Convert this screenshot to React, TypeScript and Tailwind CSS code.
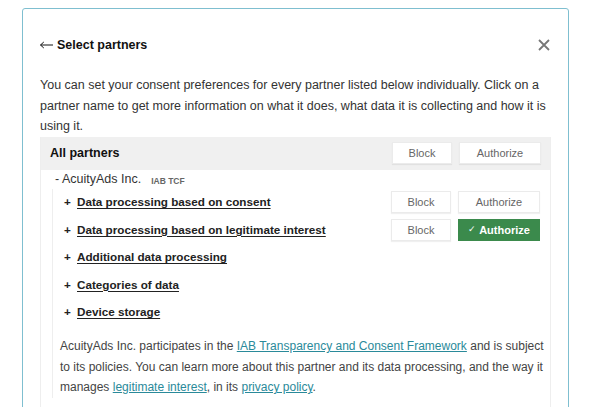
import React from "react";

const font = { fontFamily: '"Liberation Sans", Arial, sans-serif' };

function Btn({ label, active }: { label: string; active?: boolean }) {
  if (active) {
    return (
      <div className="flex h-[22px] w-[82px] items-center justify-center gap-[3px] bg-[#3b8a4c] text-[11px] font-bold text-white">
        <span className="text-[9px] font-normal">✓</span>
        <span>{label}</span>
      </div>
    );
  }
  return (
    <div
      className={`flex h-[22px] items-center justify-center border border-[#ebebeb] bg-white text-[11px] text-[#666] shadow-[0_1px_1px_rgba(0,0,0,0.06)] ${
        label === "Block" ? "w-[60px]" : "w-[82px]"
      }`}
    >
      {label}
    </div>
  );
}

function Item({ label, buttons, active }: { label: string; buttons?: boolean; active?: boolean }) {
  return (
    <div className="flex h-[27.5px] items-center justify-between pl-[4px] pr-[10px]">
      <div className="flex items-center text-[11.7px] font-bold text-[#222]">
        <span className="w-[13px]">+</span>
        <span className="underline underline-offset-2">{label}</span>
      </div>
      {buttons && (
        <div className="flex gap-[7px]">
          <Btn label="Block" />
          <Btn label="Authorize" active={active} />
        </div>
      )}
    </div>
  );
}

export default function App() {
  return (
    <div className="min-h-screen overflow-hidden bg-white pl-[22px] pt-[8px]" style={font}>
      <div className="h-[420px] w-[547px] rounded-[3px] border border-[#7fbfd0] bg-white px-[17px] pt-[26px]">
        <div className="flex h-[20px] items-center justify-between">
          <div className="flex items-center text-[12.5px] font-bold text-[#111]">
            <svg width="13" height="8" viewBox="0 0 13 8" className="mr-[4px]">
              <path d="M0.5 4H13M0.5 4L3.8 1M0.5 4L3.8 7" stroke="#111" strokeWidth="1" fill="none" />
            </svg>
            <span>Select partners</span>
          </div>
          <svg width="12" height="12" viewBox="0 0 12 12" className="mr-[1px]">
            <path d="M1 1L11 11M11 1L1 11" stroke="#777" strokeWidth="1.8" />
          </svg>
        </div>
        <p className="mt-[20px] text-[12.5px] leading-[20.5px] text-[#333]">
          You can set your consent preferences for every partner listed below individually. Click on a partner name
          to get more information on what it does, what data it is collecting and how it is using it.
        </p>
        <div className="h-[300px] border-x border-[#eee]">
          <div className="flex h-[33px] items-center justify-between bg-[#f0f0f0] pl-[9px] pr-[9px]">
            <div className="text-[12.5px] font-bold text-[#111]">All partners</div>
            <div className="flex gap-[7px]">
              <Btn label="Block" />
              <Btn label="Authorize" />
            </div>
          </div>
          <div className="flex h-[19px] items-end pl-[14px] text-[12.5px] text-[#333]">
            <span>- AcuityAds Inc.</span>
            <span className="mb-[1px] ml-[10px] text-[8.5px] font-bold text-[#666]">IAB TCF</span>
          </div>
          <div className="ml-[11px] border-l border-[#eee] pl-[7px]">
            <Item label="Data processing based on consent" buttons />
            <Item label="Data processing based on legitimate interest" buttons active />
            <Item label="Additional data processing" />
            <Item label="Categories of data" />
            <Item label="Device storage" />
            <p className="mt-[10px] pr-[6px] text-[12px] leading-[20.5px] text-[#444]">
              AcuityAds Inc. participates in the{" "}
              <span className="text-[#2a8a9a] underline">IAB Transparency and Consent Framework</span> and is subject
              to its policies. You can learn more about this partner and its data processing, and the way it manages{" "}
              <span className="text-[#2a8a9a] underline">legitimate interest</span>, in its{" "}
              <span className="text-[#2a8a9a] underline">privacy policy</span>.
            </p>
          </div>
        </div>
      </div>
    </div>
  );
}
